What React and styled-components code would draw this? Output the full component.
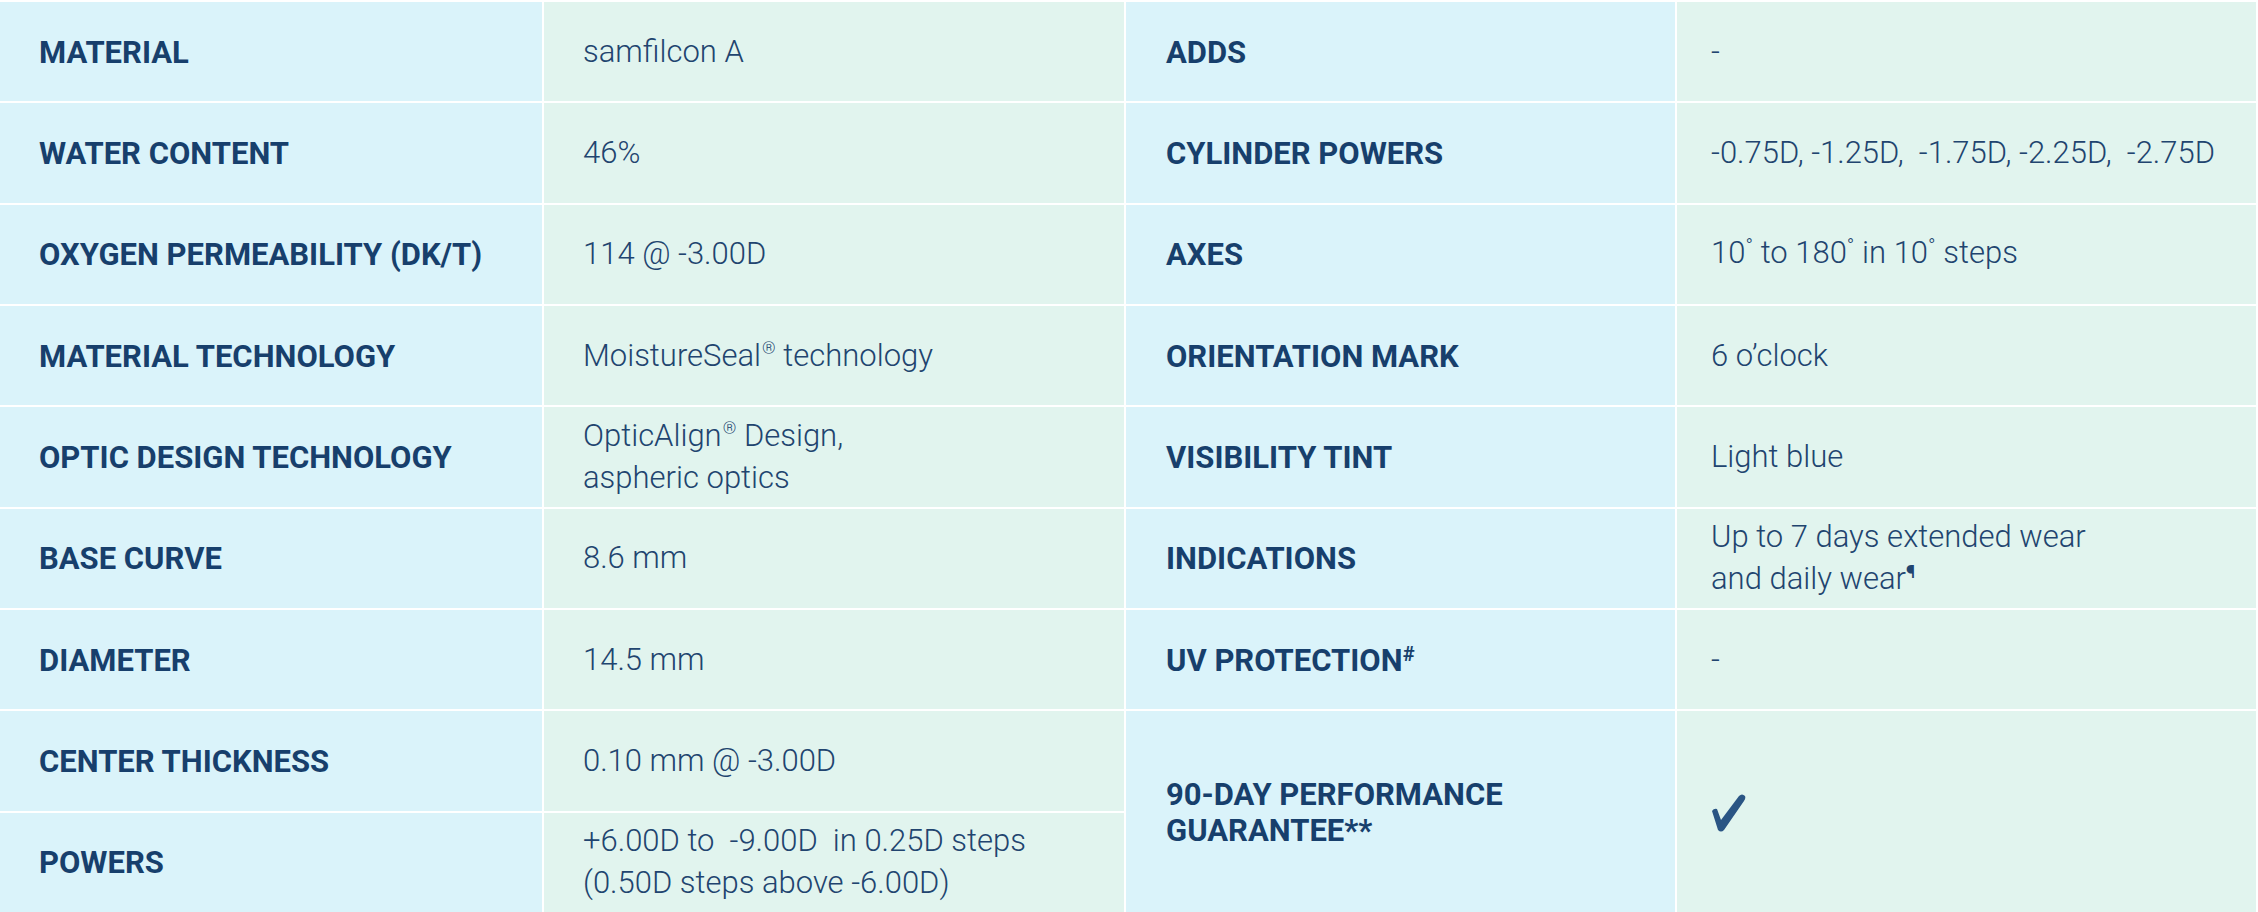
import React from "react";
import styled, { createGlobalStyle } from "styled-components";

const Global = createGlobalStyle`
  html, body { margin: 0; padding: 0; background: #ffffff; }
  body { font-family: Roboto, "Liberation Sans", sans-serif; }
`;

const Table = styled.div`
  display: grid;
  grid-template-columns: 542px 580px 549px 579px;
  grid-template-rows: repeat(9, 1fr);
  gap: 2px;
  padding: 2px 2px 0 0;
  height: 912px;
  box-sizing: border-box;
  background: #ffffff;
  color: #163f6b;
`;

const Label = styled.div`
  grid-row: span ${(p) => p.$span || 1};
  background: #daf3fa;
  display: flex;
  align-items: center;
  padding-left: ${(p) => (p.$right ? 40 : 39)}px;
  padding-top: 2px;
  font-family: Roboto, "Liberation Sans", sans-serif;
  font-weight: 700;
  font-size: 31px;
  line-height: 36px;
  color: #173f6c;
`;

const Value = styled.div`
  grid-row: span ${(p) => p.$span || 1};
  background: #e1f4ee;
  display: flex;
  align-items: center;
  padding-left: ${(p) => (p.$right ? 34 : 39)}px;
  font-family: Roboto, "Liberation Sans", sans-serif;
  font-weight: 300;
  font-size: 31px;
  line-height: 42px;
  color: #21446f;
  white-space: pre;
`;

const Sup = styled.sup`
  font-size: ${(p) => p.$fs || "0.55em"};
  font-weight: ${(p) => p.$fw || "inherit"};
  line-height: 0;
  vertical-align: ${(p) => p.$v || "0.7em"};
  margin-left: ${(p) => p.$ml || 0}px;
`;

const Deg = styled.span`
  font-size: 0.8em;
  position: relative;
  top: -0.25em;
`;

const Check = () => (
  <svg width="36" height="38" viewBox="0 0 36 38" style={{ marginTop: 2 }}>
    <path
      d="M1 17 Q3 14 6 15 L10 26 L28 2 Q31 -1 34 2 Q35 4 33 7 L13 36 Q10 39 7 36 Z"
      fill="#2a5584"
    />
  </svg>
);

const rows = [
  ["MATERIAL", "samfilcon A", "ADDS", "-"],
  ["WATER CONTENT", "46%", "CYLINDER POWERS", "-0.75D, -1.25D,  -1.75D, -2.25D,  -2.75D"],
  ["OXYGEN PERMEABILITY (DK/T)", "114 @ -3.00D", "AXES", "deg"],
  ["MATERIAL TECHNOLOGY", "moisture", "ORIENTATION MARK", "6 o’clock"],
  ["OPTIC DESIGN TECHNOLOGY", "optic", "VISIBILITY TINT", "Light blue"],
  ["BASE CURVE", "8.6 mm", "INDICATIONS", "indications"],
  ["DIAMETER", "14.5 mm", "uv", "-"],
];

const renderValue = (v) => {
  if (v === "deg")
    return (
      <span>
        10<Deg>˚</Deg> to 180<Deg>˚</Deg> in 10<Deg>˚</Deg> steps
      </span>
    );
  if (v === "moisture")
    return (
      <span>
        MoistureSeal<Sup $ml={1}>®</Sup> technology
      </span>
    );
  if (v === "optic")
    return (
      <span>
        OpticAlign<Sup $ml={1}>®</Sup> Design,{"\n"}aspheric optics
      </span>
    );
  if (v === "indications")
    return (
      <span>
        Up to 7 days extended wear{"\n"}and daily wear<Sup $fs="0.62em" $fw={400} $v="0.55em">¶</Sup>
      </span>
    );
  return v;
};

export default function App() {
  return (
    <>
      <Global />
      <Table>
        {rows.map(([l1, v1, l2, v2]) => (
          <React.Fragment key={l1}>
            <Label>{l1}</Label>
            <Value>{renderValue(v1)}</Value>
            <Label $right>
              {l2 === "uv" ? (
                <span>
                  UV PROTECTION<Sup $fs="0.65em" $v="0.5em">#</Sup>
                </span>
              ) : (
                l2
              )}
            </Label>
            <Value $right>{renderValue(v2)}</Value>
          </React.Fragment>
        ))}
        <Label>CENTER THICKNESS</Label>
        <Value>0.10 mm @ -3.00D</Value>
        <Label $right $span={2}>
          <span>
            90-DAY PERFORMANCE
            <br />
            GUARANTEE**
          </span>
        </Label>
        <Value $right $span={2}>
          <Check />
        </Value>
        <Label>POWERS</Label>
        <Value>{"+6.00D to  -9.00D  in 0.25D steps\n(0.50D steps above -6.00D)"}</Value>
      </Table>
    </>
  );
}
